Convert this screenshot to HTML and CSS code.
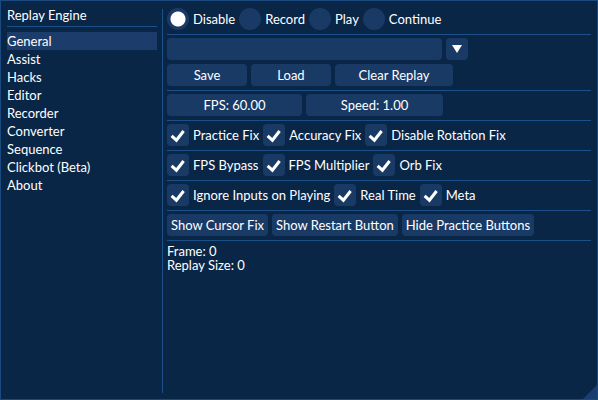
FILE: index.html
```html
<!DOCTYPE html>
<html lang="en">
<head>
<meta charset="utf-8">
<title>Replay Engine</title>
<link rel="stylesheet" href="styles.css">
</head>
<body>
<div class="window">
  <aside class="sidebar">
    <div class="title">Replay Engine</div>
    <div class="hsep"></div>
    <ul class="nav">
      <li class="active">General</li>
      <li>Assist</li>
      <li>Hacks</li>
      <li>Editor</li>
      <li>Recorder</li>
      <li>Converter</li>
      <li>Sequence</li>
      <li>Clickbot (Beta)</li>
      <li>About</li>
    </ul>
  </aside>
  <div class="vsep"></div>
  <main class="content">
    <div class="row">
      <label class="radio checked"><span class="dot"></span><span class="lbl">Disable</span></label>
      <label class="radio"><span class="dot"></span><span class="lbl">Record</span></label>
      <label class="radio"><span class="dot"></span><span class="lbl">Play</span></label>
      <label class="radio"><span class="dot"></span><span class="lbl">Continue</span></label>
    </div>
    <div class="sep"></div>
    <div class="row">
      <div class="combo"></div>
      <div class="btn arrow"><svg width="10" height="8" viewBox="0 0 10 8"><polygon points="0,0 10,0 5,8" fill="#ffffff"/></svg></div>
    </div>
    <div class="row spaced">
      <div class="btn w-save">Save</div>
      <div class="btn w-save">Load</div>
      <div class="btn w-clear">Clear Replay</div>
    </div>
    <div class="sep"></div>
    <div class="row">
      <div class="btn w-fps">FPS: 60.00</div>
      <div class="btn w-speed">Speed: 1.00</div>
    </div>
    <div class="sep"></div>
    <div class="row">
      <label class="check"><span class="box"><svg width="22" height="22" viewBox="0 0 22 22"><polyline points="4.6,11.8 9.4,16.2 16.6,7" fill="none" stroke="#fff" stroke-width="3"/></svg></span><span class="lbl">Practice Fix</span></label>
      <label class="check"><span class="box"><svg width="22" height="22" viewBox="0 0 22 22"><polyline points="4.6,11.8 9.4,16.2 16.6,7" fill="none" stroke="#fff" stroke-width="3"/></svg></span><span class="lbl">Accuracy Fix</span></label>
      <label class="check"><span class="box"><svg width="22" height="22" viewBox="0 0 22 22"><polyline points="4.6,11.8 9.4,16.2 16.6,7" fill="none" stroke="#fff" stroke-width="3"/></svg></span><span class="lbl">Disable Rotation Fix</span></label>
    </div>
    <div class="sep"></div>
    <div class="row">
      <label class="check"><span class="box"><svg width="22" height="22" viewBox="0 0 22 22"><polyline points="4.6,11.8 9.4,16.2 16.6,7" fill="none" stroke="#fff" stroke-width="3"/></svg></span><span class="lbl">FPS Bypass</span></label>
      <label class="check"><span class="box"><svg width="22" height="22" viewBox="0 0 22 22"><polyline points="4.6,11.8 9.4,16.2 16.6,7" fill="none" stroke="#fff" stroke-width="3"/></svg></span><span class="lbl">FPS Multiplier</span></label>
      <label class="check"><span class="box"><svg width="22" height="22" viewBox="0 0 22 22"><polyline points="4.6,11.8 9.4,16.2 16.6,7" fill="none" stroke="#fff" stroke-width="3"/></svg></span><span class="lbl">Orb Fix</span></label>
    </div>
    <div class="sep"></div>
    <div class="row">
      <label class="check"><span class="box"><svg width="22" height="22" viewBox="0 0 22 22"><polyline points="4.6,11.8 9.4,16.2 16.6,7" fill="none" stroke="#fff" stroke-width="3"/></svg></span><span class="lbl">Ignore Inputs on Playing</span></label>
      <label class="check"><span class="box"><svg width="22" height="22" viewBox="0 0 22 22"><polyline points="4.6,11.8 9.4,16.2 16.6,7" fill="none" stroke="#fff" stroke-width="3"/></svg></span><span class="lbl">Real Time</span></label>
      <label class="check"><span class="box"><svg width="22" height="22" viewBox="0 0 22 22"><polyline points="4.6,11.8 9.4,16.2 16.6,7" fill="none" stroke="#fff" stroke-width="3"/></svg></span><span class="lbl">Meta</span></label>
    </div>
    <div class="sep"></div>
    <div class="row">
      <div class="btn auto">Show Cursor Fix</div>
      <div class="btn auto">Show Restart Button</div>
      <div class="btn auto">Hide Practice Buttons</div>
    </div>
    <div class="sep"></div>
    <div class="info">
      <div class="line">Frame: 0</div>
      <div class="line">Replay Size: 0</div>
    </div>
  </main>
  <div class="grip"></div>
</div>
</body>
</html>
```

FILE: styles.css
```css
* { box-sizing: border-box; }

html, body {
  margin: 0;
  padding: 0;
  background: #0a2647;
}

body {
  font-family: Lato, "Noto Sans", sans-serif;
  font-size: 13px;
  line-height: 14px;
  color: #ffffff;
}

.window {
  position: relative;
  width: 598px;
  height: 400px;
  border: 1px solid #1b4a80;
  background: #0a2647;
  display: flex;
  align-items: flex-start;
  overflow: hidden;
}

.sidebar {
  width: 150px;
  margin-left: 6px;
  padding-top: 7px;
  flex: none;
}

.title {
  height: 14px;
  line-height: 14px;
  white-space: nowrap;
}

.hsep {
  height: 1px;
  margin-top: 4px;
  background: #1c5089;
}

.nav {
  list-style: none;
  margin: 5px 0 0;
  padding: 0;
}

.nav li {
  height: 18px;
  line-height: 18px;
  white-space: nowrap;
}

.nav li.active {
  background: #1c3d6c;
}

.vsep {
  width: 1px;
  flex: none;
  align-self: stretch;
  margin: 8px 0 6px 5px;
  background: #1c5089;
}

.content {
  width: 424px;
  margin-left: 4px;
  padding-top: 7px;
  flex: none;
}

.row {
  display: flex;
  gap: 4px;
  height: 22px;
}

.row.spaced {
  margin-top: 4px;
}

.sep {
  height: 1px;
  margin: 4px 0 3px;
  background: #1c5089;
}

.radio, .check {
  display: flex;
  align-items: center;
  gap: 4px;
  height: 22px;
  white-space: nowrap;
}

.dot {
  width: 22px;
  height: 22px;
  border-radius: 50%;
  background: #1a3a66;
  flex: none;
}

.radio.checked .dot {
  background: radial-gradient(circle at 50% 50%, #ffffff 0, #ffffff 7px, #1a3a66 8px);
}

.box {
  width: 22px;
  height: 22px;
  border-radius: 4px;
  background: #1a3a66;
  flex: none;
  display: block;
}

.box svg { display: block; }

.lbl {
  line-height: 22px;
}

.btn {
  height: 22px;
  line-height: 22px;
  background: #1a3a66;
  border-radius: 4px;
  text-align: center;
  white-space: nowrap;
  flex: none;
}

.combo {
  width: 275px;
  height: 22px;
  background: #1a3a66;
  border-radius: 4px;
  flex: none;
}

.arrow {
  width: 22px;
  display: flex;
  align-items: center;
  justify-content: center;
}

.arrow svg { display: block; }

.w-save { width: 80px; }
.w-clear { width: 118px; }
.w-fps { width: 135px; }
.w-speed { width: 137px; }

.btn.auto {
  padding: 0 4px;
}

.info .line {
  height: 14px;
  line-height: 14px;
}

.grip {
  position: absolute;
  right: 0;
  bottom: 0;
  width: 14px;
  height: 14px;
  background: #1c3e6e;
  clip-path: polygon(100% 0, 100% 100%, 0 100%);
}
```
